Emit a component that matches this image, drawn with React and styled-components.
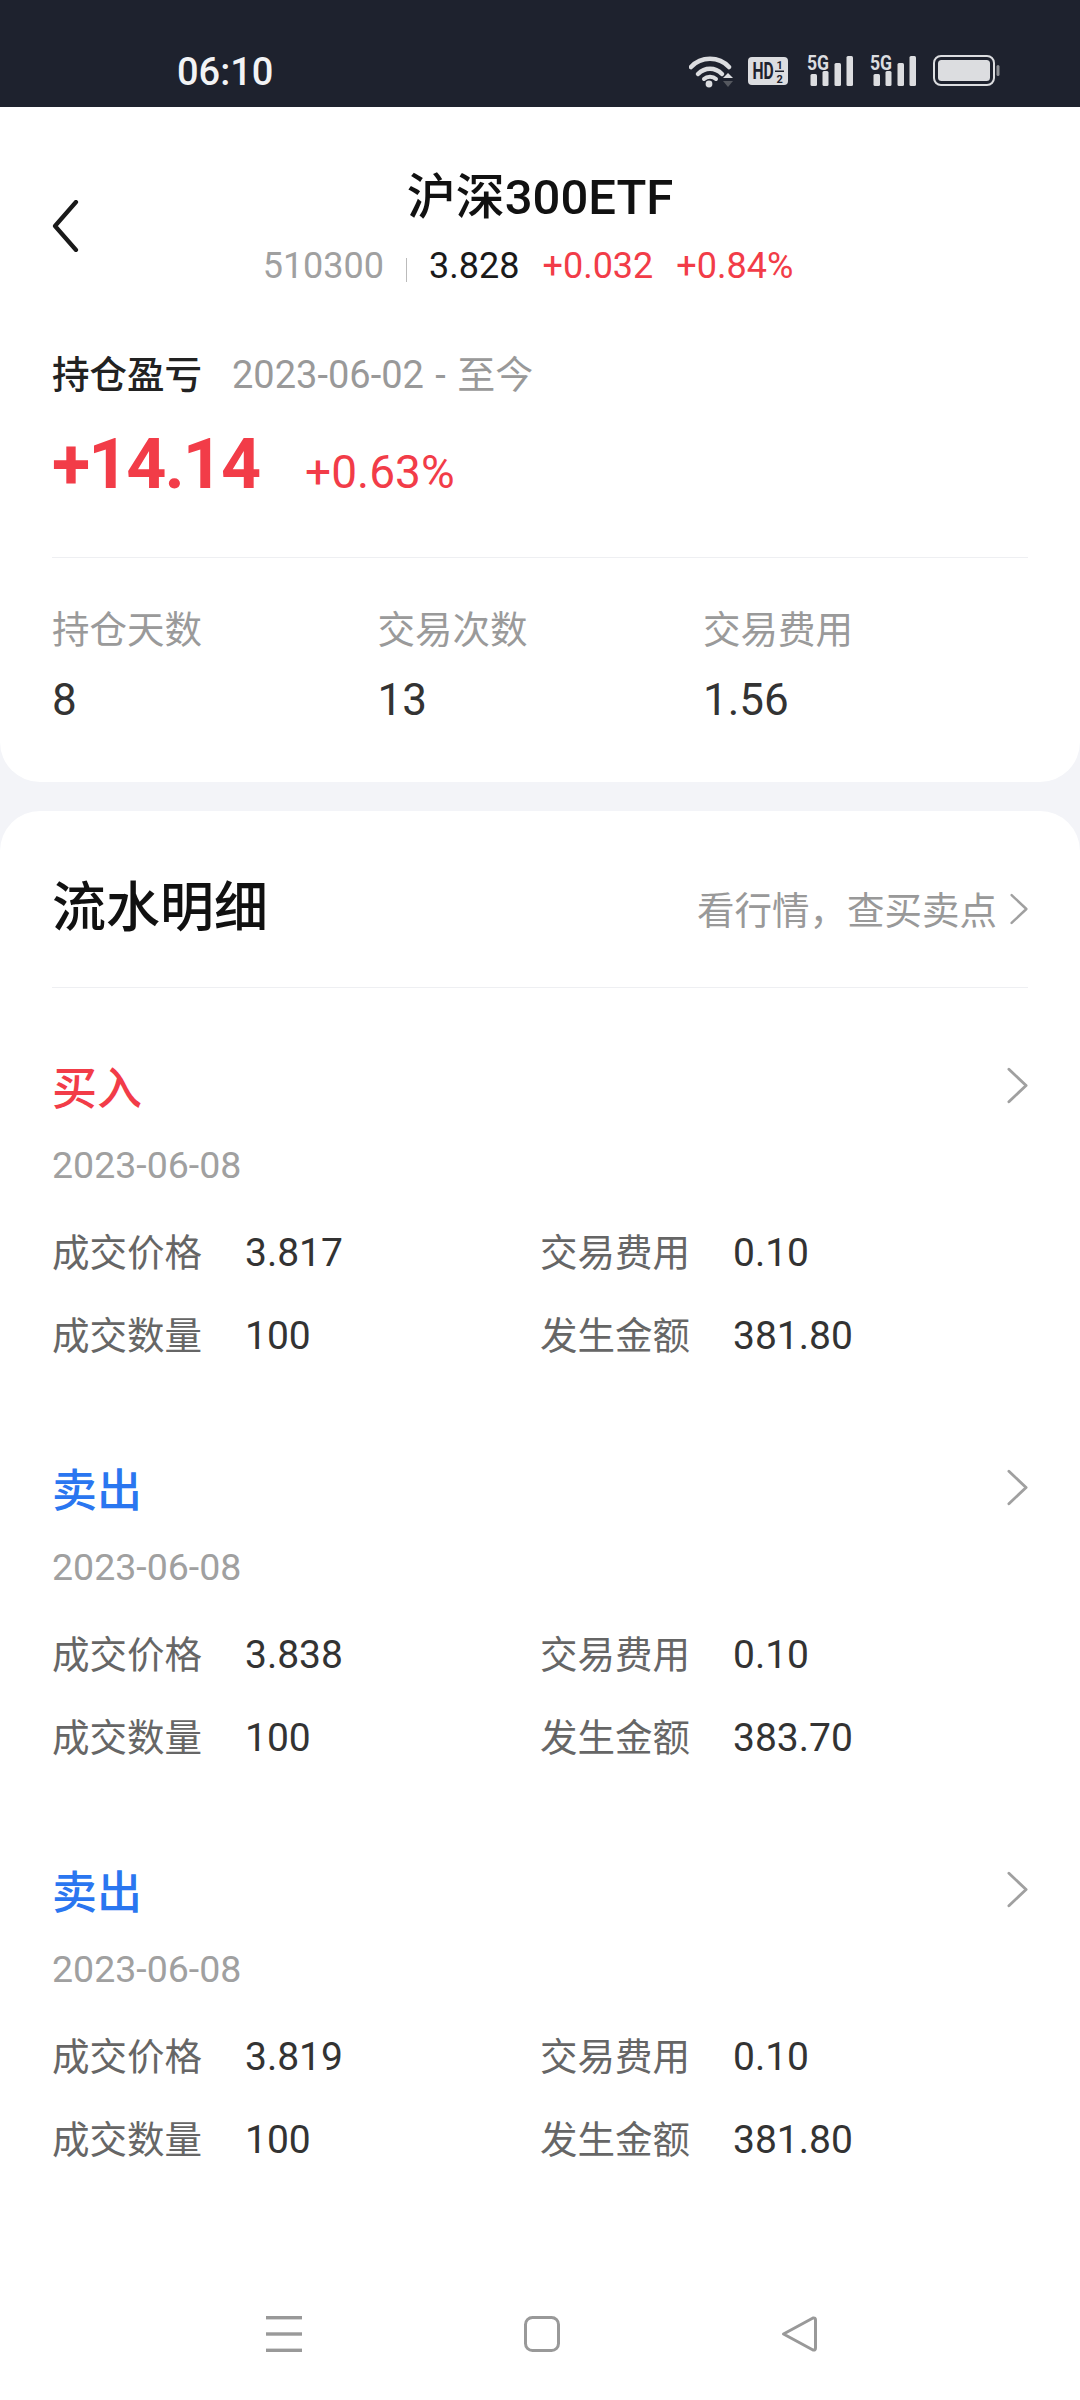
import React from "react";
import styled, { createGlobalStyle } from "styled-components";

const Global = createGlobalStyle`
  html, body { margin: 0; padding: 0; background: #f3f4f8; }
  body { font-family: Roboto, "Noto Sans CJK SC", sans-serif; }
`;
const Page = styled.div`
  width: 1080px; height: 2400px; display: flex; flex-direction: column; overflow: hidden; background: #f3f4f8;
`;
const StatusBar = styled.div`
  height: 107px; flex: none; background: #1e222e; display: flex; align-items: center;
  padding: 36px 80px 0 177px; box-sizing: border-box; justify-content: space-between;
`;
const Time = styled.span`
  color: #f2f3f5; font-size: 38px; font-weight: 500; line-height: 36px; letter-spacing: 0;
`;
const StatusIcons = styled.div`display: flex; align-items: center; gap: 0; margin-top: -2px;`;
const StatusSvg = styled.svg`display: block; flex: none; margin-left: ${p => p.$ml || 0}px;`;

const SummaryCard = styled.section`
  background: #fff; height: 675px; flex: none; border-radius: 0 0 40px 40px; box-sizing: border-box; padding: 0 52px;
`;
const Header = styled.header`
  display: grid; grid-template-columns: 1fr auto 1fr; align-items: start; height: 217px; box-sizing: border-box; padding-top: 60px;
`;
const BackIcon = styled.svg`display: block; margin-top: 33px;`;
const TitleBlock = styled.div`display: flex; flex-direction: column; align-items: center;`;
const Title = styled.h1`
  margin: 0; font-size: 49px; line-height: 62px; font-weight: 500; color: #111; letter-spacing: 0;
`;
const Quote = styled.div`
  display: flex; align-items: center; margin-top: 17px; margin-right: 24px; font-size: 36px; line-height: 40px; white-space: nowrap;
`;
const QuoteText = styled.span`color: ${p => p.$c}; margin-left: ${p => p.$ml || 0}px;`;
const QuoteRule = styled.i`display: block; width: 1px; height: 24px; background: #bbb; margin: 8px 22px 0 22px;`;

const ProfitHead = styled.div`display: flex; align-items: center; height: 50px; margin-top: 22px;`;
const ProfitLabel = styled.span`font-size: 37.5px; font-weight: 500; color: #222;`;
const ProfitDate = styled.span`font-size: 38px; color: #999; margin-left: 30px; word-spacing: 2px;`;
const ProfitRow = styled.div`display: flex; align-items: baseline; height: 90px; margin-top: 23px; line-height: 90px;`;
const ProfitValue = styled.span`font-size: 70px; font-weight: 700; color: #f23c48; letter-spacing: -2px;`;
const ProfitPct = styled.span`font-size: 46px; color: #f23c48; margin-left: 46px;`;
const Rule = styled.div`height: 1px; background: #eeeff2;`;
const StatsDivider = styled(Rule)`margin-top: 48px;`;
const Stats = styled.div`display: grid; grid-template-columns: repeat(3, 325.5px); padding-top: 47px;`;
const Stat = styled.div`display: flex; flex-direction: column;`;
const StatLabel = styled.span`font-size: 37.5px; line-height: 50px; color: #9a9a9a;`;
const StatValue = styled.span`font-size: 44px; line-height: 50px; margin-top: 20px; color: #333;`;

const FlowCard = styled.section`
  background: #fff; flex: 1; margin-top: 29px; border-radius: 40px 40px 0 0; padding: 0 52px; display: flex; flex-direction: column;
`;
const FlowHead = styled.div`display: flex; align-items: center; justify-content: space-between; height: 176px; box-sizing: border-box; padding-top: 16px;`;
const FlowTitle = styled.h2`margin: 4px 0 0; font-size: 54px; font-weight: 500; color: #111; line-height: 70px;`;
const FlowLink = styled.div`display: flex; align-items: center; font-size: 37.5px; color: #999;`;
const Chevron = styled.svg`display: block; flex: none; margin-left: ${p => p.$ml || 0}px; margin-top: ${p => p.$mt || 0}px;`;
const Trade = styled.article`height: 402px; box-sizing: border-box; padding-top: 74px;`;
const TradeHead = styled.div`display: flex; align-items: center; justify-content: space-between; height: 56px;`;
const TradeType = styled.span`font-size: 45px; line-height: 56px; font-weight: 500; color: ${p => p.$c};`;
const TradeDate = styled.div`font-size: 37.5px; line-height: 44px; color: #a0a0a0; margin-top: 25px;`;
const TradeGrid = styled.div`
  display: grid; grid-template-columns: 193px 295px 193px 1fr; margin-top: 41px; row-gap: 33px;
`;
const CellLabel = styled.span`font-size: 37.5px; line-height: 50px; color: #666;`;
const CellValue = styled.span`font-size: 39px; line-height: 50px; color: #333;`;

const NavBar = styled.nav`
  height: 174px; flex: none; margin: auto -52px 0; display: flex; align-items: flex-start; box-sizing: border-box; padding: 90px 263px 0 266px; justify-content: space-between;
`;
const NavSvg = styled.svg`display: block; flex: none;`;

const trades = [
  { t: "买入", c: "#f23c48", p: "3.817", a: "381.80" },
  { t: "卖出", c: "#2a76f0", p: "3.838", a: "383.70" },
  { t: "卖出", c: "#2a76f0", p: "3.819", a: "381.80" },
];

const Signal = ({ ml }) => (
  <StatusSvg $ml={ml} width="46" height="48" viewBox="0 -8 46 48">
    <text transform="translate(0 14.5) scale(0.88 1)" fontFamily="Roboto" fontSize="20" fontWeight="700" fill="#dcdde0">5G</text>
    <rect x="3.5" y="19" width="6.5" height="12" rx="1.5" fill="#dcdde0" />
    <rect x="15.5" y="16" width="6" height="15" rx="1.5" fill="#dcdde0" />
    <rect x="27.5" y="8" width="6.5" height="23" rx="1.5" fill="#dcdde0" />
    <rect x="39.5" y="1" width="6.5" height="30" rx="1.5" fill="#dcdde0" />
  </StatusSvg>
);

const RightChevron = ({ w = 21, h = 37, ml, mt }) => (
  <Chevron $ml={ml} $mt={mt} width={w} height={h} viewBox="0 0 22 38">
    <path d="M2 2 L20 19 L2 36" fill="none" stroke="#a0a0a0" strokeWidth="3" strokeLinecap="round" strokeLinejoin="round" />
  </Chevron>
);

export default function App() {
  return (
    <Page>
      <Global />
      <StatusBar>
        <Time>06:10</Time>
        <StatusIcons>
          <StatusSvg width="44" height="34" viewBox="0 0 44 34">
            <path d="M2 13 C12 2 30 2 40 13" fill="none" stroke="#dcdde0" strokeWidth="4.5" strokeLinecap="round" />
            <path d="M9 20 C16 13 26 13 33 20" fill="none" stroke="#dcdde0" strokeWidth="4.5" strokeLinecap="round" />
            <path d="M15 25 C18 22 24 22 27 25" fill="none" stroke="#dcdde0" strokeWidth="4" strokeLinecap="round" />
            <circle cx="20" cy="30" r="3.4" fill="#dcdde0" />
            <path d="M39 19 L44 24 H34 Z" fill="#dcdde0" />
            <path d="M39 33 L44 27 H34 Z" fill="#55585f" />
          </StatusSvg>
          <StatusSvg $ml={15} width="40" height="28" viewBox="0 0 40 28">
            <rect width="40" height="28" rx="4" fill="#dcdde0" />
            <text transform="translate(4.5 21.5) scale(0.68 1)" fontFamily="Roboto" fontSize="23" fontWeight="700" fill="#1e222e">HD</text>
            <text x="28.5" y="12" fontFamily="Roboto" fontSize="11" fontWeight="700" fill="#1e222e">1</text>
            <text x="28.5" y="26" fontFamily="Roboto" fontSize="11" fontWeight="700" fill="#1e222e">2</text>
            <rect x="27" y="13.5" width="9" height="1.5" fill="#1e222e" />
          </StatusSvg>
          <Signal ml={19} />
          <Signal ml={17} />
          <StatusSvg $ml={17} width="67" height="31" viewBox="0 0 67 31">
            <rect x="1" y="1" width="60" height="29" rx="7" fill="none" stroke="#dcdde0" strokeWidth="2" />
            <rect x="5" y="5" width="52" height="21" rx="3.5" fill="#dcdde0" />
            <rect x="63.5" y="10" width="3" height="11" rx="1.5" fill="#8d8f94" />
          </StatusSvg>
        </StatusIcons>
      </StatusBar>

      <SummaryCard>
        <Header>
          <BackIcon width="27" height="52" viewBox="0 0 27 52">
            <path d="M24 2 L3 26 L24 50" fill="none" stroke="#1a1a1a" strokeWidth="4.2" strokeLinecap="round" strokeLinejoin="round" />
          </BackIcon>
          <TitleBlock>
            <Title>沪深300ETF</Title>
            <Quote>
              <QuoteText $c="#a0a0a0">510300</QuoteText>
              <QuoteRule />
              <QuoteText $c="#1a1a1a">3.828</QuoteText>
              <QuoteText $c="#f23c48" $ml={23}>+0.032</QuoteText>
              <QuoteText $c="#f23c48" $ml={23}>+0.84%</QuoteText>
            </Quote>
          </TitleBlock>
          <span />
        </Header>
        <ProfitHead>
          <ProfitLabel>持仓盈亏</ProfitLabel>
          <ProfitDate>2023-06-02 - 至今</ProfitDate>
        </ProfitHead>
        <ProfitRow>
          <ProfitValue>+14.14</ProfitValue>
          <ProfitPct>+0.63%</ProfitPct>
        </ProfitRow>
        <StatsDivider />
        <Stats>
          <Stat><StatLabel>持仓天数</StatLabel><StatValue>8</StatValue></Stat>
          <Stat><StatLabel>交易次数</StatLabel><StatValue>13</StatValue></Stat>
          <Stat><StatLabel>交易费用</StatLabel><StatValue>1.56</StatValue></Stat>
        </Stats>
      </SummaryCard>

      <FlowCard>
        <FlowHead>
          <FlowTitle>流水明细</FlowTitle>
          <FlowLink>看行情，查买卖点<RightChevron ml={13} w={18} h={32} mt={3} /></FlowLink>
        </FlowHead>
        <Rule />
        {trades.map((x, i) => (
          <Trade key={i}>
            <TradeHead>
              <TradeType $c={x.c}>{x.t}</TradeType>
              <RightChevron mt={-10} />
            </TradeHead>
            <TradeDate>2023-06-08</TradeDate>
            <TradeGrid>
              <CellLabel>成交价格</CellLabel><CellValue>{x.p}</CellValue>
              <CellLabel>交易费用</CellLabel><CellValue>0.10</CellValue>
              <CellLabel>成交数量</CellLabel><CellValue>100</CellValue>
              <CellLabel>发生金额</CellLabel><CellValue>{x.a}</CellValue>
            </TradeGrid>
          </Trade>
        ))}
        <NavBar>
          <NavSvg width="36" height="36" viewBox="0 0 36 36">
            <rect y="0" width="36" height="3.4" fill="#999" />
            <rect y="16.3" width="36" height="3.4" fill="#999" />
            <rect y="32.6" width="36" height="3.4" fill="#999" />
          </NavSvg>
          <NavSvg width="36" height="36" viewBox="0 0 36 36">
            <rect x="1.5" y="1.5" width="33" height="33" rx="7" fill="none" stroke="#999" strokeWidth="3" />
          </NavSvg>
          <NavSvg width="36" height="36" viewBox="0 0 36 36">
            <path d="M2.5 18 L32 2 Q34.5 1.5 34.5 4 V32 Q34.5 34.5 32 34 Z" fill="none" stroke="#999" strokeWidth="3" strokeLinejoin="round" />
          </NavSvg>
        </NavBar>
      </FlowCard>
    </Page>
  );
}
